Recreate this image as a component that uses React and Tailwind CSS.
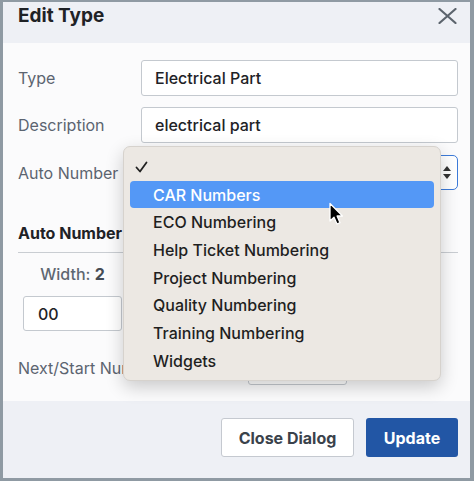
import React from "react";

const items = [
  "CAR Numbers",
  "ECO Numbering",
  "Help Ticket Numbering",
  "Project Numbering",
  "Quality Numbering",
  "Training Numbering",
  "Widgets",
];

function Field({ label, value, className = "" }) {
  return (
    <div className={"flex items-center " + className}>
      <div className="w-[123px] text-[16px] text-[#5b6470]">{label}</div>
      <div className="flex-1 h-[36px] flex items-center border border-[#c4c9cf] rounded-[3px] bg-white px-[13px] text-[16px] font-medium text-[#1e2226]">
        {value}
      </div>
    </div>
  );
}

export default function App() {
  return (
    <div
      className="relative w-[474px] h-[481px] bg-[#8f9aa3] pt-[2px] pl-[3px] pr-[4px] pb-[3px]"
      style={{ fontFamily: "Inter, 'Noto Sans', sans-serif" }}
    >
      <div className="h-full flex flex-col bg-[#fbfbfc]">
        <div className="h-[41px] shrink-0 bg-[#eef0f5] flex items-start justify-between pl-[15px] pr-[13px]">
          <h1 className="text-[19px] font-bold leading-[24px] mt-[2px] text-[#1f2226]">Edit Type</h1>
          <svg width="19" height="16" viewBox="0 0 19 16" className="mt-[6px]">
            <path d="M1.5 1 L17.5 15 M17.5 1 L1.5 15" stroke="#5c646d" strokeWidth="2.2" strokeLinecap="round" />
          </svg>
        </div>

        <div className="flex-1 pl-[15px] pr-[12px] pt-[17px]">
          <Field label="Type" value="Electrical Part" />
          <Field label="Description" value="electrical part" className="mt-[11px]" />
          <div className="flex items-center mt-[12px]">
            <div className="w-[123px] text-[16px] text-[#5b6470]">Auto Number</div>
            <div className="flex-1 h-[35px] border-[1.5px] border-[#3d7bd9] rounded-[5px] bg-white flex items-center justify-end pr-[5px]">
              <svg width="10" height="15" viewBox="0 0 10 15">
                <path d="M5 1 L9 6 L1 6 Z" fill="#333" />
                <path d="M1 9 L9 9 L5 14 Z" fill="#333" />
              </svg>
            </div>
          </div>

          <div className="mt-[33px] w-[105px] overflow-hidden whitespace-nowrap text-[16px] font-bold leading-[20px] text-[#1f2226]">
            Auto Number Format
          </div>
          <div className="mt-[9px] border-t border-[#c9cdd2]" />

          <div className="ml-[5px] w-[99px] mt-[11px] text-center text-[16px] leading-[20px] text-[#5f6771]">
            <span className="font-medium">Width: </span>
            <span className="font-bold text-[#454c55]">2</span>
          </div>
          <div className="ml-[5px] mt-[12px] w-[99px] h-[35px] border border-[#c4c9cf] rounded-[3px] bg-white flex items-center px-[14px] text-[16px] font-medium text-[#1e2226]">
            00
          </div>

          <div className="flex items-center mt-[19px] h-[35px]">
            <div className="w-[105px] overflow-hidden whitespace-nowrap text-[16px] text-[#5b6470]">Next/Start Number</div>
            <div className="ml-[125px] w-[99px] h-[35px] border border-[#c4c9cf] rounded-[3px] bg-white" />
          </div>
        </div>

        <div className="h-[77px] shrink-0 bg-[#eef0f5] flex justify-end items-start gap-[12px] pt-[17px] pr-[12px]">
          <button className="w-[133px] h-[39px] bg-white border border-[#c5c9d0] rounded-[3px] text-[16px] font-bold text-[#3a424b]">
            Close Dialog
          </button>
          <button className="w-[92px] h-[39px] bg-[#2256a5] rounded-[3px] text-[16px] font-bold text-white">
            Update
          </button>
        </div>
      </div>

      <div className="absolute left-[123px] top-[146px] w-[318px] h-[235px] rounded-[7px] bg-[#ece8e3] border border-[#d6d2cd] shadow-[0_6px_18px_rgba(0,0,0,0.2)] pt-[6px] px-[6px]">
        <div className="h-[27.7px] flex items-center pl-[5px]">
          <svg width="13" height="12" viewBox="0 0 13 12">
            <path d="M1.5 6.5 L5 10.5 L11.5 1.5" stroke="#222" strokeWidth="1.8" fill="none" strokeLinecap="round" strokeLinejoin="round" />
          </svg>
        </div>
        {items.map((it, i) => (
          <div
            key={it}
            className={
              "h-[27.7px] flex items-center pl-[23px] rounded-[4px] text-[16px] font-medium " +
              (i === 0 ? "bg-[#5498f6] text-white" : "text-[#1f1f1f]")
            }
          >
            {it}
          </div>
        ))}
      </div>

      <svg className="absolute left-[328px] top-[202px]" width="17" height="25" viewBox="0 0 17 25">
        <path
          d="M2 1.5 L2 19 L6 15.2 L9 22 L12 20.7 L9.1 14 L14.5 14 Z"
          fill="#000"
          stroke="#fff"
          strokeWidth="1.3"
          strokeLinejoin="round"
        />
      </svg>
    </div>
  );
}
